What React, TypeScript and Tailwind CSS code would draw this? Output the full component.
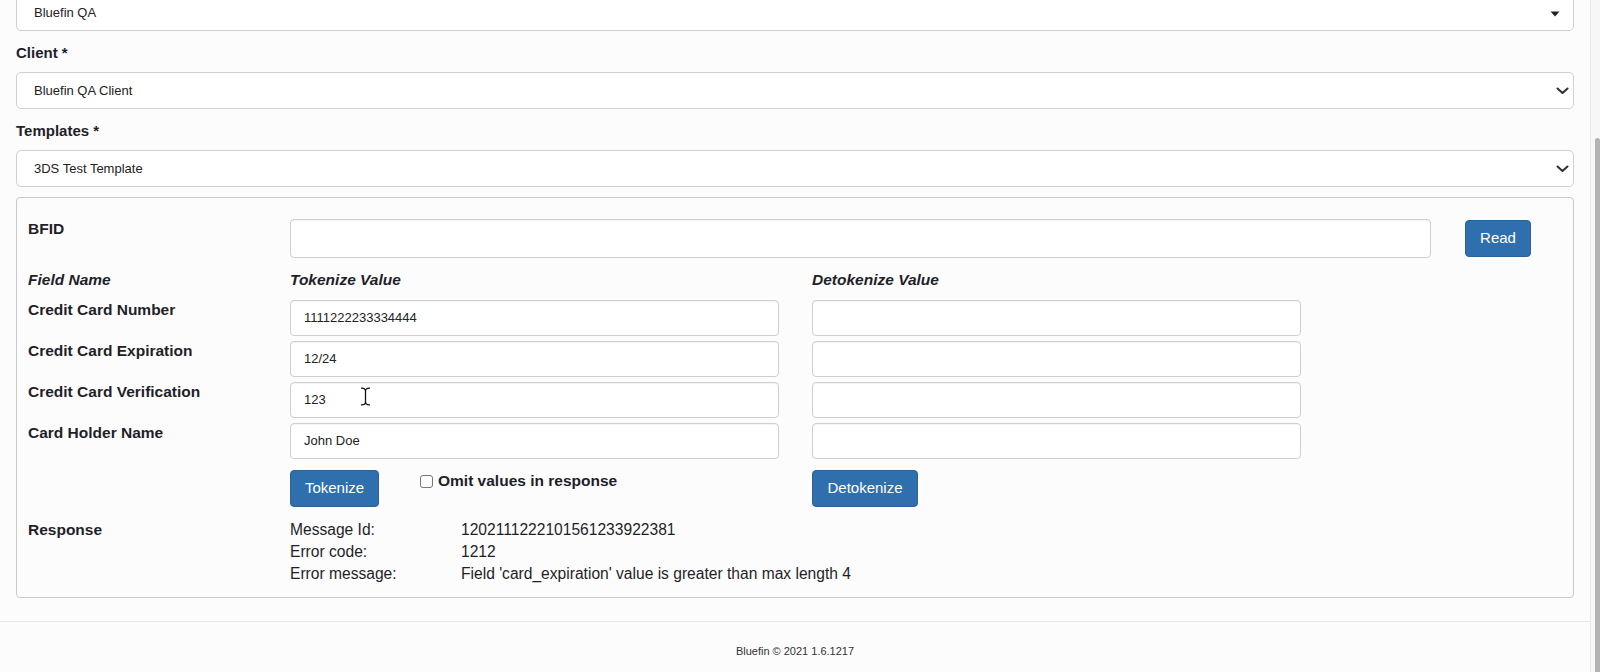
import React from "react";

const font = { fontFamily: '"Liberation Sans", Arial, Helvetica, sans-serif' };

const fields = [
  { name: "Credit Card Number", value: "1111222233334444" },
  { name: "Credit Card Expiration", value: "12/24" },
  { name: "Credit Card Verification", value: "123", cursor: true },
  { name: "Card Holder Name", value: "John Doe" },
];

const response = [
  { label: "Message Id:", value: "1202111222101561233922381" },
  { label: "Error code:", value: "1212" },
  { label: "Error message:", value: "Field 'card_expiration' value is greater than max length 4" },
];

function Chevron() {
  return (
    <svg width="13" height="8" viewBox="0 0 13 8" className="shrink-0">
      <path d="M1.5 1.5 L6.5 6 L11.5 1.5" fill="none" stroke="#333" strokeWidth="2.1" strokeLinecap="round" strokeLinejoin="round" />
    </svg>
  );
}

function SelectBox({ value, arrow }: { value: string; arrow: React.ReactNode }) {
  return (
    <div className="flex h-[37px] items-center justify-between rounded-[5px] border border-[#cfcfd4] bg-white pl-[17px] pr-[4px] text-[13px] text-[#222]">
      <span>{value}</span>
      {arrow}
    </div>
  );
}

function TextInput({ value, width, cursor }: { value?: string; width: string; cursor?: boolean }) {
  return (
    <div className={`relative flex h-[36px] items-center rounded-[4px] border border-[#cfcfcf] bg-white pl-[13px] text-[13px] text-[#222] shadow-[inset_0_1px_1px_rgba(0,0,0,0.05)] ${width}`}>
      {value}
      {cursor && (
        <svg width="11" height="19" viewBox="0 0 11 19" className="absolute left-[69px] top-[4px]">
          <path d="M1 1.2 Q5.5 0.8 5.5 4 Q5.5 0.8 10 1.2 M5.5 4 V15 M1 17.8 Q5.5 18.2 5.5 15 Q5.5 18.2 10 17.8" fill="none" stroke="#111" strokeWidth="1.3" />
        </svg>
      )}
    </div>
  );
}

function Button({ children, width }: { children: React.ReactNode; width: string }) {
  return (
    <button className={`h-[37px] rounded-[4px] border border-[#2a629a] bg-[#2f6fae] text-[15px] text-white ${width}`}>
      {children}
    </button>
  );
}

export default function App() {
  return (
    <div className="flex h-[672px] w-[1600px] overflow-hidden bg-[#fcfcfc] text-[#1f1f29]" style={font}>
      <div className="flex w-[1590px] flex-col">
        <div className="-mt-[6px] px-[16px]">
          <SelectBox
            value="Bluefin QA"
            arrow={
              <svg width="10" height="6" viewBox="0 0 10 6" className="mr-[9px] mt-[2px]">
                <path d="M0.5 0.5 H9.5 L5 5.5 Z" fill="#222" />
              </svg>
            }
          />
          <div className="mb-[9px] mt-[12px] text-[15px] font-bold leading-[20px]">Client *</div>
          <SelectBox value="Bluefin QA Client" arrow={<Chevron />} />
          <div className="mb-[9px] mt-[12px] text-[15px] font-bold leading-[20px]">Templates *</div>
          <SelectBox value="3DS Test Template" arrow={<Chevron />} />

          {/* token panel */}
          <div className="mt-[10px] rounded-[4px] border border-[#c9c9c9] px-[11px] pb-[12px] pt-[21px]">
            <div className="flex items-start">
              <div className="w-[262px] text-[15.5px] font-bold leading-[20px]">BFID</div>
              <div className="h-[39px] w-[1141px] rounded-[4px] border border-[#cfcfcf] bg-white shadow-[inset_0_1px_1px_rgba(0,0,0,0.05)]" />
              <div className="ml-[34px] pt-[1px]">
                <Button width="w-[66px]">Read</Button>
              </div>
            </div>

            <div className="mt-[12px] grid grid-cols-[262px_522px_1fr] text-[15.5px] font-bold italic leading-[20px]">
              <div>Field Name</div>
              <div>Tokenize Value</div>
              <div>Detokenize Value</div>
            </div>

            <div className="mt-[10px] flex flex-col gap-[5px]">
              {fields.map((f) => (
                <div key={f.name} className="grid grid-cols-[262px_522px_1fr] items-start">
                  <div className="text-[15.5px] font-bold leading-[20px]">{f.name}</div>
                  <TextInput value={f.value} width="w-[489px]" cursor={f.cursor} />
                  <TextInput width="w-[489px]" />
                </div>
              ))}
            </div>

            <div className="mt-[11px] grid grid-cols-[262px_522px_1fr] items-start">
              <div />
              <div className="flex items-start">
                <Button width="w-[89px]">Tokenize</Button>
                <label className="ml-[41px] mt-[1px] flex items-center gap-[5px] text-[15.5px] font-bold leading-[20px]">
                  <span className="inline-block h-[13px] w-[13px] rounded-[3px] border border-[#767676] bg-white" />
                  Omit values in response
                </label>
              </div>
              <div>
                <Button width="w-[106px]">Detokenize</Button>
              </div>
            </div>

            <div className="mt-[12px] flex items-start">
              <div className="w-[262px] text-[15.5px] font-bold leading-[22px]">Response</div>
              <div className="flex flex-col text-[15.6px] leading-[22px]">
                {response.map((r) => (
                  <div key={r.label} className="flex">
                    <span className="w-[171px]">{r.label}</span>
                    <span>{r.value}</span>
                  </div>
                ))}
              </div>
            </div>
          </div>
        </div>

        <footer className="mt-[23px] border-t border-[#e6e6e6] pt-[21px] text-center text-[11px] leading-[16px] text-[#333]">
          Bluefin © 2021 1.6.1217
        </footer>
      </div>

      {/* scrollbar */}
      <div className="flex w-[10px] border-l border-[#e8e8e8] bg-[#f7f7f7]">
        <div className="ml-[4px] mt-[138px] h-[600px] w-[5px] rounded-t-[3px] bg-[#b3b3b3]" />
      </div>
    </div>
  );
}
